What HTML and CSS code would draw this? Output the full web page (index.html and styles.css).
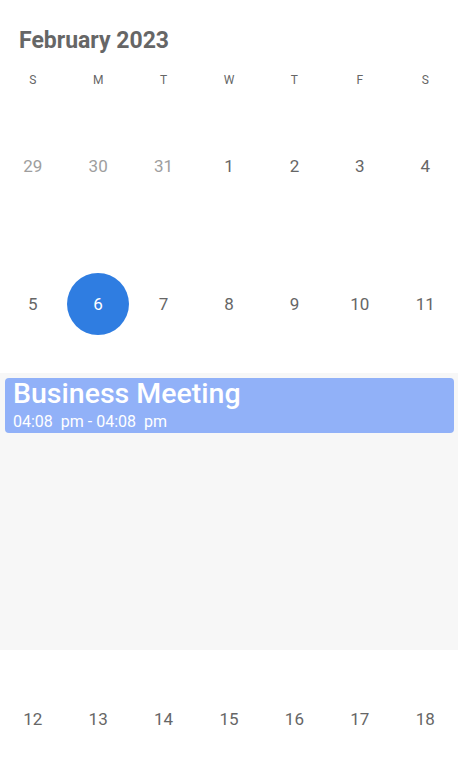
FILE: index.html
```html
<!DOCTYPE html>
<html>
<head>
<meta charset="utf-8">
<link rel="stylesheet" href="styles.css">
</head>
<body>
<div class="cal">
  <div class="title">February 2023</div>
  <div class="dow">
    <span>S</span><span>M</span><span>T</span><span>W</span><span>T</span><span>F</span><span>S</span>
  </div>
  <div class="week">
    <span class="day other">29</span><span class="day other">30</span><span class="day other">31</span><span class="day">1</span><span class="day">2</span><span class="day">3</span><span class="day">4</span>
  </div>
  <div class="week">
    <span class="day">5</span><span class="day"><span class="sel">6</span></span><span class="day">7</span><span class="day">8</span><span class="day">9</span><span class="day">10</span><span class="day">11</span>
  </div>
  <div class="events">
    <div class="event">
      <div class="ev-title">Business Meeting</div>
      <div class="ev-time">04:08&nbsp; pm - 04:08&nbsp; pm</div>
    </div>
  </div>
  <div class="week">
    <span class="day">12</span><span class="day">13</span><span class="day">14</span><span class="day">15</span><span class="day">16</span><span class="day">17</span><span class="day">18</span>
  </div>
</div>
</body>
</html>
```
FILE: styles.css
```css
html, body {
  margin: 0;
  padding: 0;
  background: #ffffff;
  font-family: Roboto, "Liberation Sans", sans-serif;
  overflow: hidden;
}
.cal {
  width: 458px;
  height: 784px;
  overflow: hidden;
}
.title {
  font-size: 23px;
  font-weight: 700;
  color: #666666;
  padding: 27px 0 0 19px;
  height: 27px;
  line-height: 27px;
}
.dow {
  display: grid;
  grid-template-columns: repeat(7, 1fr);
  margin: 14px 0 5px;
  height: 24px;
  line-height: 24px;
  font-size: 12px;
  color: #666666;
  text-align: center;
}
.week {
  display: grid;
  grid-template-columns: repeat(7, 1fr);
  height: 138px;
}
.day {
  display: flex;
  align-items: center;
  justify-content: center;
  font-size: 17px;
  color: #666666;
}
.day.other {
  color: #9e9e9e;
}
.sel {
  display: flex;
  align-items: center;
  justify-content: center;
  width: 62px;
  height: 62px;
  border-radius: 50%;
  background: #2f7de1;
  color: #ffffff;
}
.events {
  background: #f7f7f7;
  height: 277px;
  padding: 5px 4px 0 5px;
  box-sizing: border-box;
}
.event {
  background: #91b1f8;
  border-radius: 4px;
  height: 55px;
  padding: 0 8px;
  color: #ffffff;
}
.ev-title {
  font-size: 28.5px;
  font-weight: 500;
  line-height: 31px;
}
.ev-time {
  font-size: 16px;
  line-height: 18px;
  margin-top: 4px;
}
```
